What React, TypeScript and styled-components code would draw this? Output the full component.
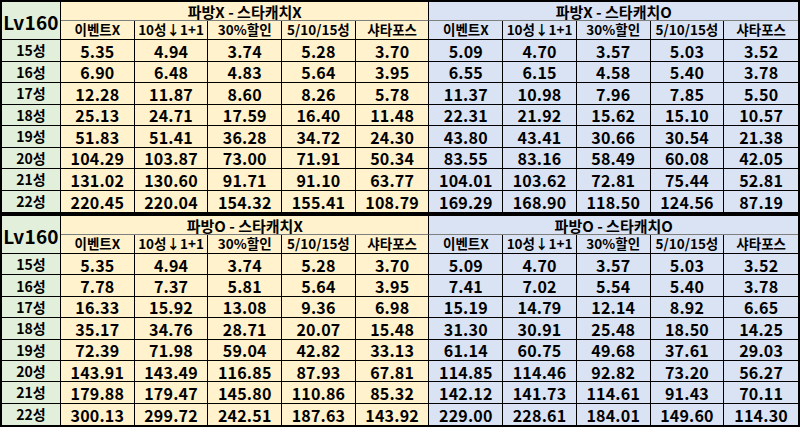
import React from "react";
import styled, { createGlobalStyle } from "styled-components";

const Global = createGlobalStyle`
  html, body { margin: 0; padding: 0; background: #fff; overflow: hidden; }
  body { font-family: "Noto Sans CJK KR", "Noto Sans", sans-serif; color: #000; }
`;

const Page = styled.div`
  width: 800px;
  height: 427px;
  display: flex;
  flex-direction: column;
`;

const Grid = styled.div<{ $h: number }>`
  box-sizing: border-box;
  width: 800px;
  height: ${(p) => p.$h}px;
  display: grid;
  grid-template-columns: 59px repeat(10, minmax(0, 1fr));
  grid-template-rows: 19px 19px repeat(8, minmax(0, 1fr));
  border: 2px solid #000;
`;

const Cell = styled.div<{ $bg: string }>`
  box-sizing: border-box;
  min-height: 0;
  min-width: 0;
  display: flex;
  align-items: center;
  justify-content: center;
  background: ${(p) => p.$bg};
  border-right: 1px solid #000;
  border-bottom: 1px solid #000;
  font-weight: 700;
  line-height: 1;
  white-space: nowrap;
`;

const Corner = styled(Cell)`
  grid-row: span 2;
  font-size: 19px;
  letter-spacing: 0.2px;
  padding-top: 2px;
`;

const GroupTitle = styled(Cell)<{ $last?: boolean }>`
  grid-column: span 5;
  font-size: 15px;
  border-bottom-color: #7f7f7f;
  border-right: ${(p) => (p.$last ? "none" : "1px solid #000")};
  padding-top: 1px;
`;

const SubHead = styled(Cell)<{ $last?: boolean }>`
  font-size: 13.5px;
  border-right: ${(p) => (p.$last ? "none" : "1px solid #000")};
`;

const Label = styled(Cell)<{ $lastRow?: boolean }>`
  font-size: 14px;
  border-bottom: ${(p) => (p.$lastRow ? "none" : "1px solid #000")};
`;

const Value = styled(Cell)<{ $last?: boolean; $lastRow?: boolean }>`
  font-size: 16px;
  letter-spacing: 0.2px;
  padding-top: 1px;
  border-right: ${(p) => (p.$last ? "none" : "1px solid #000")};
  border-bottom: ${(p) => (p.$lastRow ? "none" : "1px solid #000")};
`;

const GREEN = "#e2efda";
const YELLOW = "#fff2cc";
const BLUE = "#dae3f3";

const heads = ["이벤트X", "10성↓1+1", "30%할인", "5/10/15성", "샤타포스"];
const labels = ["15성", "16성", "17성", "18성", "19성", "20성", "21성", "22성"];

type TableData = {
  left: string;
  right: string;
  rows: string[][];
  h: number;
};

const tables: TableData[] = [
  {
    left: "파방X - 스타캐치X",
    right: "파방X - 스타캐치O",
    h: 214,
    rows: [
      ["5.35", "4.94", "3.74", "5.28", "3.70", "5.09", "4.70", "3.57", "5.03", "3.52"],
      ["6.90", "6.48", "4.83", "5.64", "3.95", "6.55", "6.15", "4.58", "5.40", "3.78"],
      ["12.28", "11.87", "8.60", "8.26", "5.78", "11.37", "10.98", "7.96", "7.85", "5.50"],
      ["25.13", "24.71", "17.59", "16.40", "11.48", "22.31", "21.92", "15.62", "15.10", "10.57"],
      ["51.83", "51.41", "36.28", "34.72", "24.30", "43.80", "43.41", "30.66", "30.54", "21.38"],
      ["104.29", "103.87", "73.00", "71.91", "50.34", "83.55", "83.16", "58.49", "60.08", "42.05"],
      ["131.02", "130.60", "91.71", "91.10", "63.77", "104.01", "103.62", "72.81", "75.44", "52.81"],
      ["220.45", "220.04", "154.32", "155.41", "108.79", "169.29", "168.90", "118.50", "124.56", "87.19"],
    ],
  },
  {
    left: "파방O - 스타캐치X",
    right: "파방O - 스타캐치O",
    h: 213,
    rows: [
      ["5.35", "4.94", "3.74", "5.28", "3.70", "5.09", "4.70", "3.57", "5.03", "3.52"],
      ["7.78", "7.37", "5.81", "5.64", "3.95", "7.41", "7.02", "5.54", "5.40", "3.78"],
      ["16.33", "15.92", "13.08", "9.36", "6.98", "15.19", "14.79", "12.14", "8.92", "6.65"],
      ["35.17", "34.76", "28.71", "20.07", "15.48", "31.30", "30.91", "25.48", "18.50", "14.25"],
      ["72.39", "71.98", "59.04", "42.82", "33.13", "61.14", "60.75", "49.68", "37.61", "29.03"],
      ["143.91", "143.49", "116.85", "87.93", "67.81", "114.85", "114.46", "92.82", "73.20", "56.27"],
      ["179.88", "179.47", "145.80", "110.86", "85.32", "142.12", "141.73", "114.61", "91.43", "70.11"],
      ["300.13", "299.72", "242.51", "187.63", "143.92", "229.00", "228.61", "184.01", "149.60", "114.30"],
    ],
  },
];

function Table({ data }: { data: TableData }) {
  return (
    <Grid $h={data.h}>
      <Corner $bg={GREEN}>Lv160</Corner>
      <GroupTitle $bg={YELLOW}>{data.left}</GroupTitle>
      <GroupTitle $bg={BLUE} $last>
        {data.right}
      </GroupTitle>
      {heads.map((h, i) => (
        <SubHead key={"y" + i} $bg={YELLOW}>
          {h}
        </SubHead>
      ))}
      {heads.map((h, i) => (
        <SubHead key={"b" + i} $bg={BLUE} $last={i === 4}>
          {h}
        </SubHead>
      ))}
      {data.rows.map((row, r) => (
        <React.Fragment key={r}>
          <Label $bg={GREEN} $lastRow={r === 7}>
            {labels[r]}
          </Label>
          {row.map((v, c) => (
            <Value
              key={c}
              $bg={c < 5 ? YELLOW : BLUE}
              $last={c === 9}
              $lastRow={r === 7}
            >
              {v}
            </Value>
          ))}
        </React.Fragment>
      ))}
    </Grid>
  );
}

export default function App() {
  return (
    <Page>
      <Global />
      {tables.map((t, i) => (
        <Table key={i} data={t} />
      ))}
    </Page>
  );
}
